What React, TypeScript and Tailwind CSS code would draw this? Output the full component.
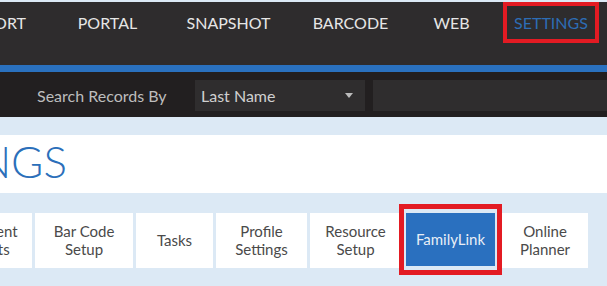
import type { ReactNode } from "react";

const NAV = [
  { label: "PORTAL", w: "w-[111px]" },
  { label: "SNAPSHOT", w: "w-[131px]" },
  { label: "BARCODE", w: "w-[113px]" },
  { label: "WEB", w: "w-[89px]" },
];

function Tab({ className, children }: { className: string; children: ReactNode }) {
  return (
    <div
      className={`flex h-full shrink-0 items-center justify-center bg-white pb-[2px] text-center text-[15px] leading-[18px] text-[#4a4a4a] ${className}`}
    >
      {children}
    </div>
  );
}

export default function App() {
  return (
    <div className="h-[286px] w-[607px] overflow-hidden bg-[#dce9f5] font-['Lato','Liberation_Sans',sans-serif]">
      {/* menu du haut */}
      <nav className="h-[63px] bg-[#2e2c2d]">
        <div className="mt-[2px] flex h-[41px] items-stretch text-[16px] text-[#e6e6e6]">
          <div className="flex w-[52px] shrink-0 items-center justify-end whitespace-nowrap pr-[26px]">
            REPORT
          </div>
          {NAV.map((n) => (
            <div key={n.label} className={`flex shrink-0 items-center justify-center ${n.w}`}>
              {n.label}
            </div>
          ))}
          <div className="ml-[7px] flex w-[96px] shrink-0 items-center justify-center border-[4px] border-[#e31b23] text-[#2d6db5]">
            SETTINGS
          </div>
        </div>
      </nav>
      <div className="h-[7px] bg-[#2a71bf]" />

      {/* recherche */}
      <div className="flex h-[45px] items-start bg-[#221f20] pt-[8px]">
        <div className="flex h-[31px] w-[195px] shrink-0 items-center pl-[37px] text-[16px] text-[#bdbdbd]">
          Search Records By
        </div>
        <div className="flex h-[31px] w-[170px] shrink-0 items-center justify-between bg-[#2f2d2e] pl-[6px] pr-[12px] text-[16px] text-[#d0d0d0]">
          <span>Last Name</span>
          <svg width="8" height="5" viewBox="0 0 8 5">
            <polygon points="0,0 8,0 4,5" fill="#bbbbbb" />
          </svg>
        </div>
        <div className="ml-[8px] h-[31px] flex-1 bg-[#2f2d2e]" />
      </div>

      {/* titre */}
      <div className="mt-[18px] flex h-[58px] items-center bg-white pb-[6px]">
        <div className="flex w-[67px] shrink-0 justify-end whitespace-nowrap text-[44px] font-light leading-none text-[#2b6fba]">
          SETTINGS
        </div>
      </div>

      {/* onglets */}
      <div className="mt-[20px] flex h-[55px] gap-[3px]">
        <Tab className="-ml-[66px] w-[98px]">
          Document
          <br />
          Formats
        </Tab>
        <Tab className="w-[98px]">
          Bar Code
          <br />
          Setup
        </Tab>
        <Tab className="w-[77px]">Tasks</Tab>
        <Tab className="w-[91px]">
          Profile
          <br />
          Settings
        </Tab>
        <Tab className="w-[91px]">
          Resource
          <br />
          Setup
        </Tab>
        <div className="relative h-full w-[93px] shrink-0 px-[2px] pb-[2px]">
          <div className="flex h-full items-center justify-center bg-[#2a70bf] text-[15px] text-[#e8eef6]">
            FamilyLink
          </div>
          <div className="absolute -bottom-[7px] -left-[5px] -right-[5px] -top-[9px] border-[5px] border-[#e31b23]" />
        </div>
        <Tab className="ml-[2px] w-[86px]">
          Online
          <br />
          Planner
        </Tab>
      </div>

      <div className="ml-[36px] mt-[18px] h-[2px] w-[532px] bg-[#8c8c8c]" />
    </div>
  );
}
